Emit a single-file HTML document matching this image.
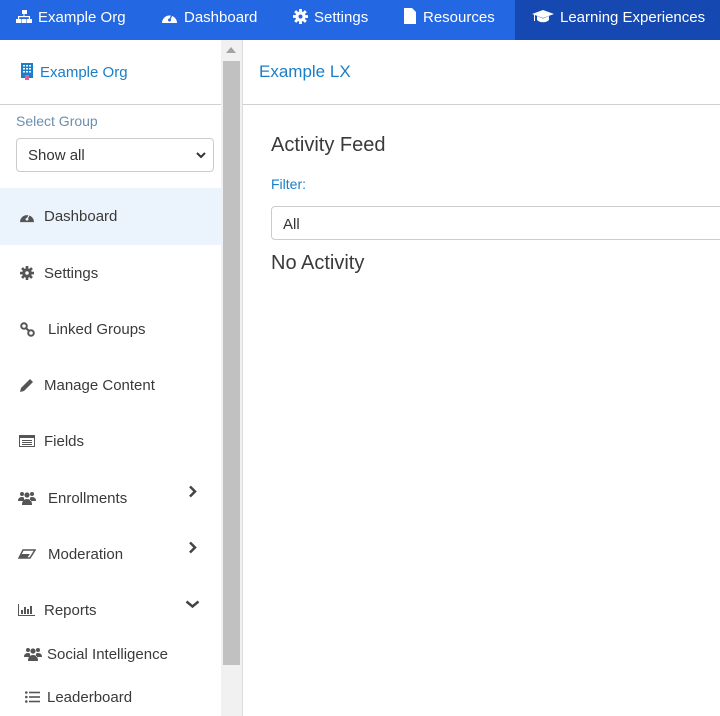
<!DOCTYPE html>
<html><head><style>
*{box-sizing:border-box;margin:0;padding:0}
body{width:720px;height:716px;overflow:hidden;font-family:"Liberation Sans",sans-serif;background:#fff;position:relative}
.nav{position:absolute;left:0;top:0;width:720px;height:40px;background:#2467e3;color:#fff;font-size:15px}
.nav .it{position:absolute;top:0;height:40px;line-height:36px;white-space:nowrap}
.nav .it svg{vertical-align:-2px;margin-right:6px}
.act{background:#1548b0}
.side{position:absolute;left:0;top:40px;width:221px;height:676px}
.sb{position:absolute;left:221px;top:40px;width:21px;height:676px;background:#f1f1f1}
.thumb{position:absolute;left:223px;top:61px;width:17px;height:604px;background:#c1c1c1}
.vline{position:absolute;left:242px;top:40px;width:1px;height:676px;background:#dcdcdc}
.hline{position:absolute;left:0;top:104px;width:720px;height:1px;background:#d0d0d0}
.t{position:absolute;white-space:nowrap}
.mi{position:absolute;left:0;width:221px;font-size:15px;color:#3a3a3a}
.mi svg{position:absolute}
</style></head><body>
<div class="nav">
 <div class="it" style="left:16px"><svg width="16" height="14" viewBox="0 0 16 14" fill="#fff"><rect x="6" y="0" width="5" height="4"/><rect x="7.5" y="4" width="1" height="3"/><rect x="2" y="6" width="12" height="1.2"/><rect x="2" y="6" width="1.2" height="3"/><rect x="12.8" y="6" width="1.2" height="3"/><rect x="0" y="9" width="5" height="4"/><rect x="5.5" y="9" width="5" height="4"/><rect x="11" y="9" width="5" height="4"/></svg>Example Org</div>
 <div class="it" style="left:161px"><svg width="17" height="14" viewBox="0 0 17 14"><path d="M1 13A7.5 7.5 0 1 1 16 13Z" fill="#fff"/><circle cx="8.5" cy="10" r="1.5" fill="#2467e3"/><path d="M8.5 10L11 5" stroke="#2467e3" stroke-width="1.3"/></svg>Dashboard</div>
 <div class="it" style="left:293px"><svg width="15" height="15" viewBox="0 0 16 16"><circle cx="8" cy="8" r="5.5" fill="#fff"/><g stroke="#fff" stroke-width="3"><path d="M8 0v16M0 8h16M2.3 2.3l11.4 11.4M13.7 2.3L2.3 13.7"/></g><circle cx="8" cy="8" r="2.2" fill="#2467e3"/></svg>Settings</div>
 <div class="it" style="left:403px"><svg width="14" height="16" viewBox="0 0 14 16"><path d="M1 0h8l4 4v12H1z" fill="#fff"/></svg>Resources</div>
 <div class="it act" style="left:515px;width:205px;padding-left:17px"><svg width="22" height="14" viewBox="0 0 22 14" fill="#fff"><path d="M11 0L22 4 11 8 0 4z"/><path d="M5 6v4c3 3 9 3 12 0V6l-6 2.5z"/><rect x="2" y="4" width="1" height="7"/></svg>Learning Experiences</div>
</div>
<div class="hline"></div>
<div class="side">
 <div class="t" style="left:21px;top:23px;font-size:15px;color:#1a7ec9"><svg width="12" height="17" viewBox="0 0 12 17" style="vertical-align:-3px;margin-right:7px"><rect x="0" y="0" width="12" height="15" fill="#1a7ec9"/><g fill="#fff"><rect x="2" y="2" width="2" height="1.5"/><rect x="5" y="2" width="2" height="1.5"/><rect x="8" y="2" width="2" height="1.5"/><rect x="2" y="5" width="2" height="1.5"/><rect x="5" y="5" width="2" height="1.5"/><rect x="8" y="5" width="2" height="1.5"/><rect x="2" y="8" width="2" height="1.5"/><rect x="5" y="8" width="2" height="1.5"/><rect x="8" y="8" width="2" height="1.5"/></g><rect x="4" y="12" width="4" height="5" fill="#e06090"/></svg>Example Org</div>
 <div class="t" style="left:16px;top:73px;font-size:14px;color:#6b8fb0">Select Group</div>
 <div style="position:absolute;left:16px;top:98px;width:198px;height:34px;border:1px solid #ccc;border-radius:4px;font-size:15px;color:#333;padding:8px 0 0 11px">Show all<svg width="10" height="7" viewBox="0 0 10 7" style="position:absolute;right:7px;top:13px"><path d="M1 1l4 4 4-4" stroke="#333" stroke-width="2" fill="none"/></svg></div>
 <div style="position:absolute;left:0;top:148px;width:221px;height:57px;background:#ebf3fc"></div>
</div>
<div class="mi" style="top:208px"><svg style="left:19px;top:2px" width="16" height="13" viewBox="0 0 17 14"><path d="M1 13A7.5 7.5 0 1 1 16 13Z" fill="#555"/><circle cx="8.5" cy="10" r="1.5" fill="#ebf3fc"/><path d="M8.5 10L11 5" stroke="#ebf3fc" stroke-width="1.3"/></svg><span class="t" style="left:44px">Dashboard</span></div>
<div class="mi" style="top:265px"><svg style="left:20px;top:1px" width="14" height="14" viewBox="0 0 16 16"><circle cx="8" cy="8" r="5.5" fill="#555"/><g stroke="#555" stroke-width="3"><path d="M8 0v16M0 8h16M2.3 2.3l11.4 11.4M13.7 2.3L2.3 13.7"/></g><circle cx="8" cy="8" r="2" fill="#fff"/></svg><span class="t" style="left:44px">Settings</span></div>
<div class="mi" style="top:321px"><svg style="left:20px;top:1px" width="15" height="15" viewBox="0 0 15 15" fill="none" stroke="#555" stroke-width="2"><circle cx="4" cy="4" r="2.8"/><circle cx="11" cy="11" r="2.8"/><path d="M6 6l3 3"/></svg><span class="t" style="left:48px">Linked Groups</span></div>
<div class="mi" style="top:377px"><svg style="left:20px;top:1px" width="14" height="14" viewBox="0 0 14 14"><path d="M0 14l1-4 9-9 3 3-9 9z" fill="#555"/></svg><span class="t" style="left:44px">Manage Content</span></div>
<div class="mi" style="top:433px"><svg style="left:19px;top:2px" width="16" height="12" viewBox="0 0 16 12"><rect x="0.5" y="0.5" width="15" height="11" fill="#fff" stroke="#555"/><rect x="0.5" y="0.5" width="15" height="2.5" fill="#555"/><g fill="#555"><rect x="3" y="5" width="10" height="1"/><rect x="3" y="7" width="10" height="1"/><rect x="3" y="9" width="10" height="1"/></g></svg><span class="t" style="left:44px">Fields</span></div>
<div class="mi" style="top:490px"><svg style="left:18px;top:1px" width="18" height="14" viewBox="0 0 18 14" fill="#555"><circle cx="4" cy="3" r="2"/><circle cx="14" cy="3" r="2"/><circle cx="9" cy="4" r="2.6"/><path d="M0 10q0-4 4-4 2 0 2 1v3zM18 10q0-4-4-4-2 0-2 1v3zM4 14q0-6 5-6 5 0 5 6z"/></svg><span class="t" style="left:48px">Enrollments</span><svg style="left:188px;top:-5px" width="9" height="13" viewBox="0 0 9 13"><path d="M2 1.5l5 5-5 5" stroke="#444" stroke-width="2.5" fill="none"/></svg></div>
<div class="mi" style="top:546px"><svg style="left:18px;top:3px" width="18" height="10" viewBox="0 0 18 10"><path d="M5 1h12l-5 8H1z" fill="none" stroke="#555" stroke-width="1.5"/><path d="M1 9l3-4h8l-3 4z" fill="#555"/></svg><span class="t" style="left:48px">Moderation</span><svg style="left:188px;top:-5px" width="9" height="13" viewBox="0 0 9 13"><path d="M2 1.5l5 5-5 5" stroke="#444" stroke-width="2.5" fill="none"/></svg></div>
<div class="mi" style="top:602px"><svg style="left:18px;top:2px" width="17" height="12" viewBox="0 0 17 12" fill="#555"><rect x="0" y="0" width="1" height="12"/><rect x="0" y="11" width="17" height="1"/><rect x="3" y="6" width="2" height="4"/><rect x="6" y="3" width="2" height="7"/><rect x="9" y="5" width="2" height="5"/><rect x="12" y="2" width="2" height="8"/></svg><span class="t" style="left:44px">Reports</span><svg style="left:185px;top:-2px" width="15" height="9" viewBox="0 0 15 9"><path d="M1.5 1.5l6 5 6-5" stroke="#444" stroke-width="2.5" fill="none"/></svg></div>
<div class="mi" style="top:646px"><svg style="left:24px;top:1px" width="18" height="14" viewBox="0 0 18 14" fill="#555"><circle cx="4" cy="3" r="2"/><circle cx="14" cy="3" r="2"/><circle cx="9" cy="4" r="2.6"/><path d="M0 10q0-4 4-4 2 0 2 1v3zM18 10q0-4-4-4-2 0-2 1v3zM4 14q0-6 5-6 5 0 5 6z"/></svg><span class="t" style="left:47px">Social Intelligence</span></div>
<div class="mi" style="top:689px"><svg style="left:25px;top:2px" width="15" height="12" viewBox="0 0 15 12" fill="#555"><circle cx="1.3" cy="1.5" r="1.3"/><circle cx="1.3" cy="6" r="1.3"/><circle cx="1.3" cy="10.5" r="1.3"/><rect x="4" y="0.7" width="11" height="1.6"/><rect x="4" y="5.2" width="11" height="1.6"/><rect x="4" y="9.7" width="11" height="1.6"/></svg><span class="t" style="left:47px">Leaderboard</span></div>
<div class="sb"></div>
<svg style="position:absolute;left:226px;top:47px" width="10" height="6" viewBox="0 0 10 6"><path d="M0 6L5 0 10 6z" fill="#a3a3a3"/></svg>
<div class="thumb"></div>
<div class="vline"></div>
<div class="t" style="left:259px;top:62px;font-size:17px;color:#1a7ec9">Example LX</div>
<div class="t" style="left:271px;top:134px;font-size:20px;color:#3a3a3a">Activity Feed</div>
<div class="t" style="left:271px;top:176px;font-size:14px;color:#1a7ec9">Filter:</div>
<div style="position:absolute;left:271px;top:206px;width:460px;height:34px;border:1px solid #ccc;border-radius:4px;font-size:15px;color:#333;padding:9px 0 0 11px">All</div>
<div class="t" style="left:271px;top:252px;font-size:20px;color:#3a3a3a">No Activity</div>
</body></html>
